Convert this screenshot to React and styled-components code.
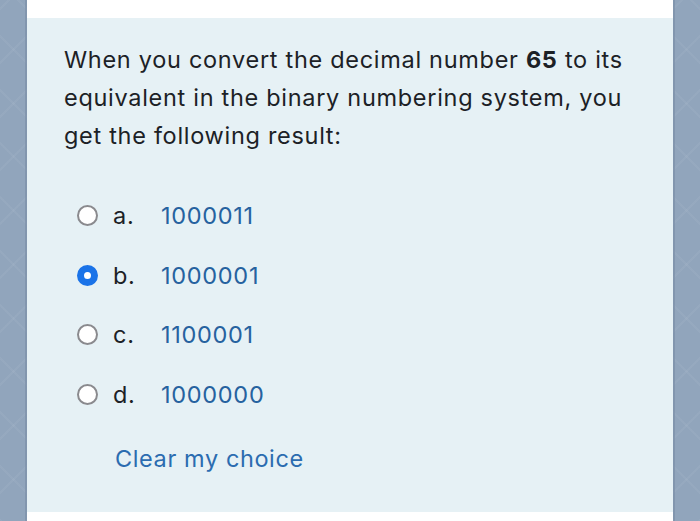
import React, { useState } from 'react';
import styled, { createGlobalStyle } from 'styled-components';

const GlobalStyle = createGlobalStyle`
  html, body {
    margin: 0;
    padding: 0;
    background: #ffffff;
  }
  body {
    font-family: Inter, "Helvetica Neue", "Liberation Sans", Arial, sans-serif;
    -webkit-font-smoothing: antialiased;
  }
`;

const options = [
  { key: 'a', value: '1000011' },
  { key: 'b', value: '1000001' },
  { key: 'c', value: '1100001' },
  { key: 'd', value: '1000000' }
];

const Page = styled.div`
  display: grid;
  grid-template-columns: 27px 1fr 27px;
  width: 700px;
  height: 521px;
  overflow: hidden;
`;

const Strip = styled.div`
  background-color: #91a5bc;
  background-image:
    repeating-linear-gradient(45deg, rgba(255, 255, 255, 0.045) 0 2px, transparent 2px 38px),
    repeating-linear-gradient(-45deg, rgba(255, 255, 255, 0.045) 0 2px, transparent 2px 38px);
  box-shadow: inset ${p => (p.side === 'left' ? '-2px' : '2px')} 0 0 rgba(120, 140, 165, 0.6);
`;

const Middle = styled.div`
  background: #ffffff;
  padding-top: 18px;
`;

const Card = styled.section`
  background: #e6f1f5;
  height: 494px;
  padding: 23px 30px 0 37px;
  box-sizing: border-box;
`;

const Question = styled.p`
  margin: 0;
  font-size: 23.5px;
  line-height: 38px;
  color: #1c2126;
  letter-spacing: 0.7px;

  strong {
    font-weight: 700;
  }
`;

const OptionList = styled.div`
  display: flex;
  flex-direction: column;
  margin-top: 31px;
  padding-left: 13px;
`;

const OptionRow = styled.label`
  display: flex;
  align-items: center;
  height: 59.5px;
  cursor: pointer;
`;

const Radio = styled.span`
  width: 21px;
  height: 21px;
  border-radius: 50%;
  box-sizing: border-box;
  flex: none;
  background: #ffffff;
  border: ${p => (p.checked ? '7px solid #1a73e8' : '2px solid #8a8a8e')};
`;

const Letter = styled.span`
  margin-left: 15px;
  width: 48px;
  font-size: 23.5px;
  letter-spacing: 0.7px;
  color: #1c2126;
`;

const Value = styled.span`
  font-size: 23.5px;
  color: #26629f;
  letter-spacing: 0.7px;
`;

const ClearLink = styled.a`
  display: inline-block;
  margin-top: 20px;
  margin-left: 51px;
  font-size: 23.5px;
  letter-spacing: 0.6px;
  color: #2b6cb0;
  text-decoration: none;
  cursor: pointer;
`;

export default function App() {
  const [selected, setSelected] = useState('b');

  return (
    <>
      <GlobalStyle />
      <Page>
        <Strip side='left' />
        <Middle>
          <Card>
            <Question>
              When you convert the decimal number <strong>65</strong> to its
              equivalent in the binary numbering system, you get the
              following result:
            </Question>
            <OptionList>
              {options.map(o => (
                <OptionRow key={o.key} onClick={() => setSelected(o.key)}>
                  <Radio checked={selected === o.key} />
                  <Letter>{o.key}.</Letter>
                  <Value>{o.value}</Value>
                </OptionRow>
              ))}
            </OptionList>
            <ClearLink onClick={() => setSelected(null)}>Clear my choice</ClearLink>
          </Card>
        </Middle>
        <Strip side='right' />
      </Page>
    </>
  );
}
